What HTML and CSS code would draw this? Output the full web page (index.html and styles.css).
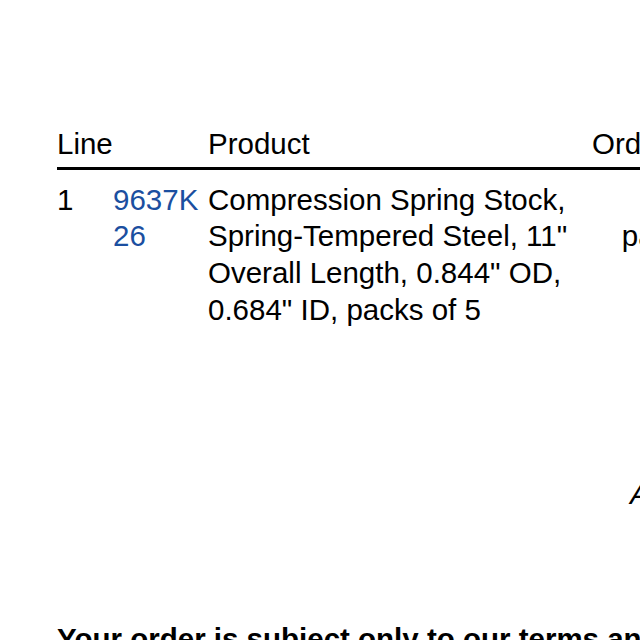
FILE: index.html
```html
<!DOCTYPE html>
<html>
<head>
<meta charset="utf-8">
<link rel="stylesheet" href="styles.css">
</head>
<body>
<div class="page">
  <div class="order-table">
    <div class="row head">
      <div class="cell c-line">Line</div>
      <div class="cell c-part"></div>
      <div class="cell c-product">Product</div>
      <div class="cell c-ordered">Ordered</div>
    </div>
    <div class="row body">
      <div class="cell c-line">1</div>
      <div class="cell c-part"><a class="part" href="#">9637K26</a></div>
      <div class="cell c-product">Compression Spring Stock, Spring-Tempered Steel, 11" Overall Length, 0.844" OD, 0.684" ID, packs of 5</div>
      <div class="cell c-ordered center">1<br>pack</div>
    </div>
  </div>
  <div class="note-row">
    <span class="note">Applicable tax</span>
  </div>
  <p class="terms">Your order is subject only to our terms and conditions</p>
</div>
</body>
</html>
```
FILE: styles.css
```css
html, body {
  margin: 0;
  padding: 0;
  background: #fff;
  overflow: hidden;
}
body {
  font-family: "Liberation Sans", Arial, sans-serif;
  font-size: 29.5px;
  line-height: 36.7px;
  color: #000;
}
.page {
  width: 1000px;
  padding: 124px 0 0 57px;
}
.order-table {
  width: 900px;
}
.row {
  display: flex;
}
.row.head {
  padding-top: 2px;
  padding-bottom: 4px;
  border-bottom: 3px solid #000;
}
.row.body {
  padding-top: 12px;
}
.cell {
  flex: none;
}
.c-line {
  width: 56px;
}
.c-part {
  width: 88px;
  padding-right: 7px;
  word-break: break-all;
}
.c-product {
  width: 370px;
  padding-right: 14px;
}
.c-ordered {
  width: 122px;
}
.c-ordered.center {
  text-align: center;
}
.part {
  color: #1b4fa0;
  text-decoration: none;
}
.note-row {
  margin-top: 147px;
  padding-left: 573px;
}
.note {
  font-style: italic;
}
.terms {
  margin: 109px 0 0;
  font-weight: bold;
}
```
